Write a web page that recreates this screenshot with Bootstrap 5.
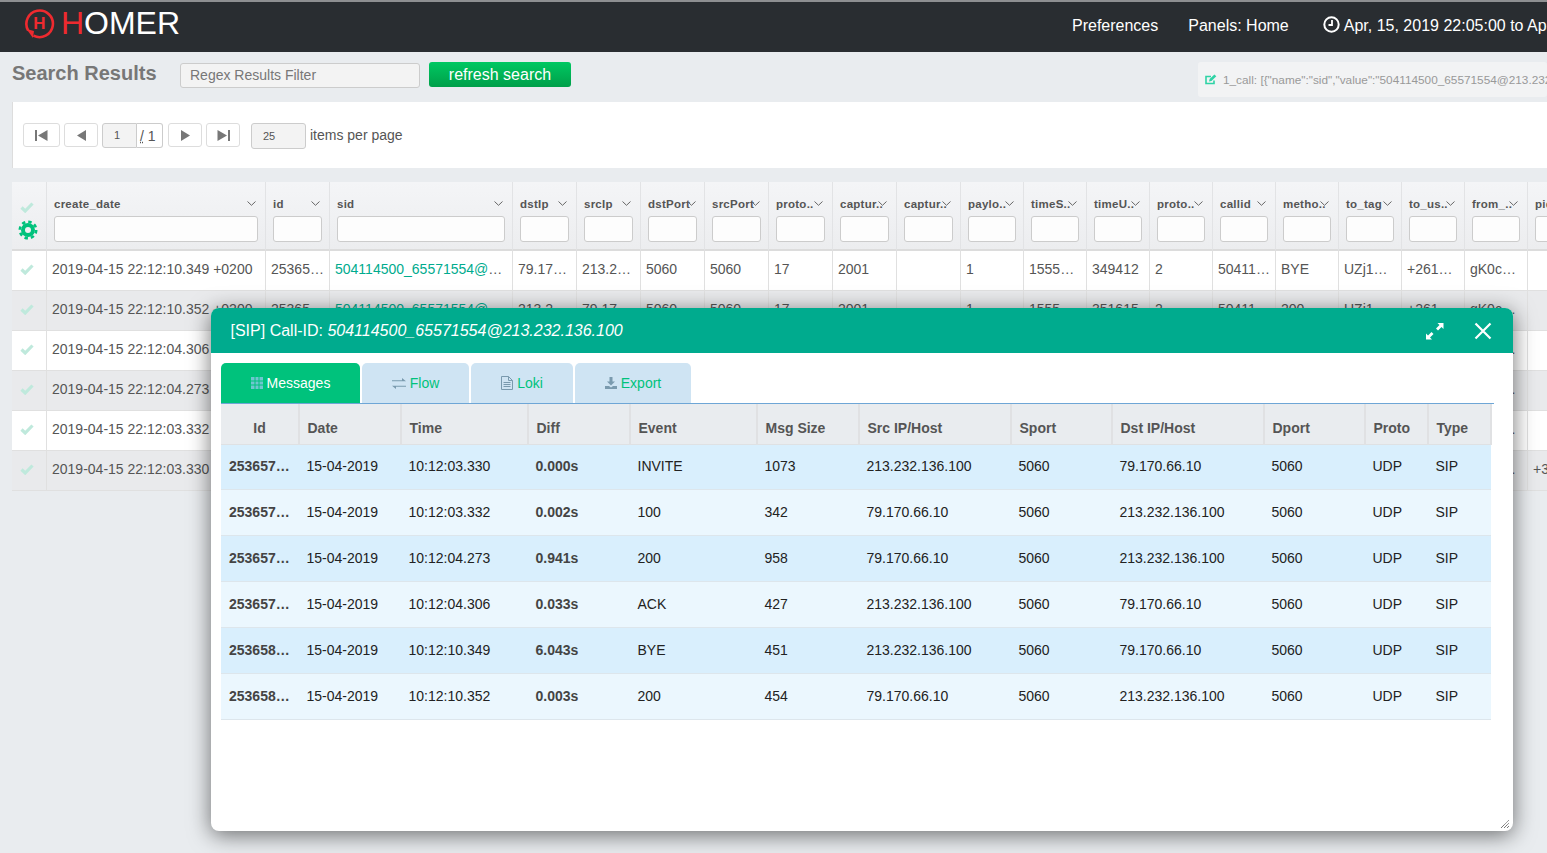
<!DOCTYPE html>
<html lang="en">
<head>
<meta charset="utf-8">
<title>HOMER</title>
<link rel="stylesheet" href="https://cdn.jsdelivr.net/npm/bootstrap@5.3.0/dist/css/bootstrap.min.css">
<style>
html,body{height:853px;overflow:hidden}
body{background:#e9ecef;font-family:"Liberation Sans",Arial,sans-serif;font-size:14px;color:#555;position:relative}
.topbar{height:52px;background:#292d31;border-top:2px solid #8d8f91;color:#fff;white-space:nowrap;overflow:hidden}
.brand{margin:-6px 0 0 24px;width:156px;height:40px;font-size:32px;line-height:38px;color:#fff;gap:6px}
.brand b{font-weight:400;color:#ee2a2f}
.brand-word{margin-top:-2px}
.topnav{font-size:16px;margin-left:auto;width:475px;flex:none;gap:30px;margin-top:-3px}
.topnav svg{margin-right:4px;vertical-align:-2px}
.toolbar{height:50px;white-space:nowrap;overflow:hidden}
.page-title{margin:-8px 0 0 12px;width:168px;font-size:20px;font-weight:700;color:#777;line-height:24px}
.regex-input{width:240px;height:25px;margin-top:-4px;padding:0 9px;background:#f3f3f3;border:1px solid #ccc;border-radius:3px;font-size:14px;color:#777}
.regex-input::placeholder{color:#777;opacity:1}
.refresh-btn{width:142px;height:25px;margin:-5px 0 0 9px;padding:0;font-size:16px;line-height:23px;color:#fff;border:0;border-radius:3px;background:linear-gradient(#00c862,#009f49)}
.tagbox{margin:10px 0 0 auto;width:349px;height:35px;flex:none;padding:11px 0 0 7px;background:#f2f3f4;border-radius:3px;font-size:11.8px;line-height:14px;color:#999;overflow:hidden}
.tagbox svg{margin-right:6px;vertical-align:-1px}
.pager-panel{height:66px;margin-left:12px;background:#fff;border-left:1px solid #ddd;padding:21px 0 0 10px;gap:4px}
.pg-btn{width:37px;height:24px;padding:0;background:#fff;border:1px solid #ddd;border-radius:3px}
.pg-btn.narrow{width:34px}
.pg-page{width:35px;height:25px;text-align:center;padding-right:5px;font-size:11px;line-height:23px;background:#f3f3f3;border:1px solid #ccc;border-radius:3px 0 0 3px;color:#555}
.pg-total{width:26px;height:25px;margin-left:-4px;border:1px solid #ccc;border-left:0;border-radius:0 3px 3px 0;color:#555;font-size:14px;line-height:24px;padding-left:3px;margin-right:1px}
.pg-size{width:55px;height:26px;margin-left:7px;padding-left:11px;font-size:11px;line-height:25px;background:#f3f3f3;border:1px solid #ccc;border-radius:3px;color:#555}
.pg-label{margin-left:0;line-height:24px;color:#555}
.grid-wrap{margin:14px 0 0 12px;overflow:hidden;width:1535px}
.results{table-layout:fixed;width:1579px;margin:0;border-collapse:separate;border-spacing:0;color:#555}
.results th{height:69px;padding:0;position:relative;font-size:11.5px;letter-spacing:.25px;font-weight:700;vertical-align:top;background:linear-gradient(#f4f5f7,#ecedef);border-right:1px solid #e2e3e5;border-bottom:2px solid #dcdcdc}
.results td{height:40px;padding:0 5px 2px;vertical-align:middle;border-right:1px solid #e0e0e0;border-bottom:1px solid #e0e0e0;white-space:nowrap;overflow:hidden;text-overflow:ellipsis;background:#fff;color:#555;font-size:14px}
.results tbody tr:nth-child(even) td{background:#e9eaec}
.results a{color:#00ab8e;text-decoration:none}
.results td.chk{padding:0 0 3px 8px}
.hd-title{display:block;padding:15px 0 0 7px;line-height:14px;white-space:nowrap;overflow:hidden}
.hd-arrow{position:absolute;right:9px;top:19px}
.hd-arrow.tight{right:8px}
.hd-input{display:block;margin:5px 0 0 7px;width:calc(100% - 14px);height:26px;background:#fdfdfd;border:1px solid #ccc;border-radius:3px}
.hd-check{position:absolute;left:8px;top:20px}
.hd-gear{position:absolute;left:6px;top:38px}
.c0{width:35px}.c1{width:219px}.c2{width:64px}.c3{width:183px}.c4{width:64px}.c5{width:63px}
.call-window{position:absolute;left:211px;top:308px;width:1302px;height:523px;background:#fff;border:0;border-radius:8px;box-shadow:0 4px 22px rgba(0,0,0,.55);z-index:10;display:block}
.call-head{height:45px;background:#00ab8e;color:#fff;font-size:16px;border-radius:8px 8px 0 0;padding:0 21px 0 19.500px;border:0;justify-content:flex-start}
.call-head i{font-style:italic}
.head-tools{margin-left:auto;gap:30px;margin-top:1px}
.call-tabs{margin:10px 0 0 10px;width:1273px;height:41px;border-bottom:1px solid #6ea6d6;gap:2px}
.call-tabs .tab-link{height:40px;padding:0;display:flex;align-items:center;justify-content:center;gap:4px;background:#cfe4f3;color:#00c27c;border:0;border-radius:5px 5px 0 0;font-size:14px;margin:0;text-decoration:none}
.call-tabs .tab-link.active{background:#00c27c;color:#fff;border:0}
.t1{width:139px}.t2{width:107px}.t3{width:102px}.t4{width:116px}
.msg-table{margin:0 0 0 10px;table-layout:fixed;width:1270px;color:#222;border-collapse:collapse}
.msg-table th{height:40px;padding:10px 7.500px 0;font-size:14px;font-weight:700;color:#555;background:#e9ecef;border:0;border-right:2px solid #e0e1e3;border-bottom:1px solid #dfe1e3;vertical-align:middle}
.msg-table th:first-child{text-align:center}
.msg-table td{height:46px;padding:0 7.500px;font-size:14px;color:#222;background:#ebf7fe;border:0;border-bottom:1px solid #dde6ec;vertical-align:middle;white-space:nowrap;overflow:hidden;text-overflow:ellipsis}
.msg-table tbody tr:first-child td{height:45px}
.msg-table td:first-child{padding-left:8px}
.msg-table tbody tr:nth-child(odd) td{background:#d9effd}
.msg-table td.strong-cell{font-weight:700;color:#444}
.m1{width:78px}.m2{width:102px}.m3{width:127px}.m4{width:152px}.m5{width:101px}.m6{width:63px}
.grip{position:absolute;right:4px;bottom:3px}
</style>
</head>
<body>
<nav class="topbar d-flex align-items-center">
  <div class="brand d-flex align-items-center">
    <svg width="31" height="32" viewBox="0 0 31 32" aria-hidden="true">
      <path d="M4.200 22.500A13.300 13.300 0 1 1 9.500 27.600" fill="none" stroke="#ee2a2f" stroke-width="2.600"/>
      <path d="M2.500 21l7.500 2-1 7z" fill="#ee2a2f"/>
      <text x="15.500" y="21.500" text-anchor="middle" font-family="Liberation Sans" font-weight="700" font-size="17" fill="#ee2a2f">H</text>
    </svg>
    <span class="brand-word"><b>H</b>OMER</span>
  </div>
  <div class="topnav d-flex">
    <span>Preferences</span>
    <span>Panels: Home</span>
    <span class="ms-1"><svg width="17" height="17" viewBox="0 0 17 17" aria-hidden="true"><circle cx="8.500" cy="8.500" r="7.200" fill="none" stroke="#fff" stroke-width="2"/><path d="M9 4v5H5.500" fill="none" stroke="#fff" stroke-width="1.800"/></svg>Apr, 15, 2019 22:05:00 to Apr, 15, 2019 22:15:00</span>
  </div>
</nav>

<div class="toolbar d-flex align-items-center">
  <div class="page-title">Search Results</div>
  <input class="regex-input" type="text" placeholder="Regex Results Filter">
  <button class="btn refresh-btn" type="button">refresh search</button>
  <div class="tagbox align-self-start">
    <svg width="12" height="11" viewBox="0 0 12 11" aria-hidden="true"><path d="M9 6.500V9.500H1V2.500H6" fill="none" stroke="#2ed3a5" stroke-width="1.600"/><path d="M4 7.500l.6-2.400L9.400.4l1.900 1.800-4.800 4.700z" fill="#2ed3a5"/></svg>1_call: [{"name":"sid","value":"504114500_65571554@213.232.136.100"}]
  </div>
</div>

<div class="pager-panel d-flex align-items-start">
  <button class="pg-btn" type="button" aria-label="first"><svg width="13" height="11" viewBox="0 0 13 11"><path d="M0 0h2v11H0zM12.500 0v11L3 5.500z" fill="#777"/></svg></button>
  <button class="pg-btn narrow" type="button" aria-label="previous"><svg width="9" height="11" viewBox="0 0 9 11"><path d="M9 0v11L0 5.500z" fill="#777"/></svg></button>
  <div class="pg-page">1</div>
  <div class="pg-total"><abbr title="Total pages">/</abbr> 1</div>
  <button class="pg-btn narrow" type="button" aria-label="next"><svg width="9" height="11" viewBox="0 0 9 11"><path d="M0 0v11l9-5.500z" fill="#777"/></svg></button>
  <button class="pg-btn narrow" type="button" aria-label="last"><svg width="13" height="11" viewBox="0 0 13 11"><path d="M13 0h-2v11h2zM.5 0v11L10 5.500z" fill="#777"/></svg></button>
  <div class="pg-size">25</div>
  <div class="pg-label">items per page</div>
</div>

<svg width="0" height="0" class="position-absolute" aria-hidden="true">
  <symbol id="chev" viewBox="0 0 9 5"><path d="M.5.5l4 3.800 4-3.800" fill="none" stroke="#666" stroke-width="1"/></symbol>
  <symbol id="tick" viewBox="0 0 14 11"><path d="M1.500 5.500l3.700 3.500 7.300-7.500" fill="none" stroke="#bfe9dc" stroke-width="3.200"/></symbol>
</svg>

<div class="grid-wrap">
<table class="table results">
  <colgroup><col class="c0"><col class="c1"><col class="c2"><col class="c3"><col class="c4"><col class="c4"><col class="c4"><col class="c4"><col class="c4"><col class="c4"><col class="c4"><col class="c5"><col class="c5"><col class="c5"><col class="c5"><col class="c5"><col class="c5"><col class="c5"><col class="c5"><col class="c5"></colgroup>
  <thead><tr>
    <th><svg class="hd-check" width="14" height="11"><use href="#tick"/></svg>
      <svg class="hd-gear" width="20" height="20" viewBox="0 0 20 20" aria-hidden="true"><circle cx="10" cy="10" r="5" fill="none" stroke="#00c27c" stroke-width="4"/><circle cx="10" cy="10" r="8.200" fill="none" stroke="#00c27c" stroke-width="2.600" stroke-dasharray="3.440 3"/></svg></th>
    <th><span class="hd-title">create_date</span><svg class="hd-arrow" width="9" height="5"><use href="#chev"/></svg><input class="hd-input" type="text" aria-label="create_date"></th>
    <th><span class="hd-title">id</span><svg class="hd-arrow" width="9" height="5"><use href="#chev"/></svg><input class="hd-input" type="text" aria-label="id"></th>
    <th><span class="hd-title">sid</span><svg class="hd-arrow" width="9" height="5"><use href="#chev"/></svg><input class="hd-input" type="text" aria-label="sid"></th>
    <th><span class="hd-title">dstIp</span><svg class="hd-arrow" width="9" height="5"><use href="#chev"/></svg><input class="hd-input" type="text" aria-label="dstIp"></th>
    <th><span class="hd-title">srcIp</span><svg class="hd-arrow" width="9" height="5"><use href="#chev"/></svg><input class="hd-input" type="text" aria-label="srcIp"></th>
    <th><span class="hd-title">dstPort</span><svg class="hd-arrow tight" width="9" height="5"><use href="#chev"/></svg><input class="hd-input" type="text" aria-label="dstPort"></th>
    <th><span class="hd-title">srcPort</span><svg class="hd-arrow tight" width="9" height="5"><use href="#chev"/></svg><input class="hd-input" type="text" aria-label="srcPort"></th>
    <th><span class="hd-title">proto..</span><svg class="hd-arrow" width="9" height="5"><use href="#chev"/></svg><input class="hd-input" type="text" aria-label="proto"></th>
    <th><span class="hd-title">captur..</span><svg class="hd-arrow" width="9" height="5"><use href="#chev"/></svg><input class="hd-input" type="text" aria-label="captur"></th>
    <th><span class="hd-title">captur..</span><svg class="hd-arrow" width="9" height="5"><use href="#chev"/></svg><input class="hd-input" type="text" aria-label="captur"></th>
    <th><span class="hd-title">paylo..</span><svg class="hd-arrow" width="9" height="5"><use href="#chev"/></svg><input class="hd-input" type="text" aria-label="paylo"></th>
    <th><span class="hd-title">timeS..</span><svg class="hd-arrow" width="9" height="5"><use href="#chev"/></svg><input class="hd-input" type="text" aria-label="timeS"></th>
    <th><span class="hd-title">timeU..</span><svg class="hd-arrow" width="9" height="5"><use href="#chev"/></svg><input class="hd-input" type="text" aria-label="timeU"></th>
    <th><span class="hd-title">proto..</span><svg class="hd-arrow" width="9" height="5"><use href="#chev"/></svg><input class="hd-input" type="text" aria-label="proto"></th>
    <th><span class="hd-title">callid</span><svg class="hd-arrow" width="9" height="5"><use href="#chev"/></svg><input class="hd-input" type="text" aria-label="callid"></th>
    <th><span class="hd-title">metho..</span><svg class="hd-arrow" width="9" height="5"><use href="#chev"/></svg><input class="hd-input" type="text" aria-label="method"></th>
    <th><span class="hd-title">to_tag</span><svg class="hd-arrow" width="9" height="5"><use href="#chev"/></svg><input class="hd-input" type="text" aria-label="to_tag"></th>
    <th><span class="hd-title">to_us..</span><svg class="hd-arrow" width="9" height="5"><use href="#chev"/></svg><input class="hd-input" type="text" aria-label="to_user"></th>
    <th><span class="hd-title">from_..</span><svg class="hd-arrow" width="9" height="5"><use href="#chev"/></svg><input class="hd-input" type="text" aria-label="from"></th>
    <th><span class="hd-title">pid</span><input class="hd-input" type="text" aria-label="pid"></th>
  </tr></thead>
  <tbody>
    <tr><td class="chk"><svg width="14" height="11"><use href="#tick"/></svg></td><td>2019-04-15 22:12:10.349 +0200</td><td>253658123</td><td><a href="#">504114500_65571554@213.232.136.100</a></td><td>79.170.66.10</td><td>213.232.136.100</td><td>5060</td><td>5060</td><td>17</td><td>2001</td><td></td><td>1</td><td>1555359130</td><td>349412</td><td>2</td><td>504114500_65571554</td><td>BYE</td><td>UZj1WWWW</td><td>+26134567</td><td>gK0c1234</td><td></td></tr>
    <tr><td class="chk"><svg width="14" height="11"><use href="#tick"/></svg></td><td>2019-04-15 22:12:10.352 +0200</td><td>253658124</td><td><a href="#">504114500_65571554@213.232.136.100</a></td><td>213.232.136.100</td><td>79.170.66.10</td><td>5060</td><td>5060</td><td>17</td><td>2001</td><td></td><td>1</td><td>1555359130</td><td>351615</td><td>2</td><td>504114500_65571554</td><td>200</td><td>UZj1WWWW</td><td>+26134567</td><td>gK0c1234</td><td></td></tr>
    <tr><td class="chk"><svg width="14" height="11"><use href="#tick"/></svg></td><td>2019-04-15 22:12:04.306 +0200</td><td>253657890</td><td><a href="#">504114500_65571554@213.232.136.100</a></td><td>79.170.66.10</td><td>213.232.136.100</td><td>5060</td><td>5060</td><td>17</td><td>2001</td><td></td><td>1</td><td>1555359124</td><td>306120</td><td>2</td><td>504114500_65571554</td><td>ACK</td><td>UZj1WWWW</td><td>+26134567</td><td>gK0c1234</td><td></td></tr>
    <tr><td class="chk"><svg width="14" height="11"><use href="#tick"/></svg></td><td>2019-04-15 22:12:04.273 +0200</td><td>253657889</td><td><a href="#">504114500_65571554@213.232.136.100</a></td><td>213.232.136.100</td><td>79.170.66.10</td><td>5060</td><td>5060</td><td>17</td><td>2001</td><td></td><td>1</td><td>1555359124</td><td>273004</td><td>2</td><td>504114500_65571554</td><td>200</td><td>UZj1WWWW</td><td>+26134567</td><td>gK0c1234</td><td></td></tr>
    <tr><td class="chk"><svg width="14" height="11"><use href="#tick"/></svg></td><td>2019-04-15 22:12:03.332 +0200</td><td>253657788</td><td><a href="#">504114500_65571554@213.232.136.100</a></td><td>213.232.136.100</td><td>79.170.66.10</td><td>5060</td><td>5060</td><td>17</td><td>2001</td><td></td><td>1</td><td>1555359123</td><td>332410</td><td>2</td><td>504114500_65571554</td><td>100</td><td></td><td>+26134567</td><td>gK0c1234</td><td></td></tr>
    <tr><td class="chk"><svg width="14" height="11"><use href="#tick"/></svg></td><td>2019-04-15 22:12:03.330 +0200</td><td>253657787</td><td><a href="#">504114500_65571554@213.232.136.100</a></td><td>79.170.66.10</td><td>213.232.136.100</td><td>5060</td><td>5060</td><td>17</td><td>2001</td><td></td><td>1</td><td>1555359123</td><td>330118</td><td>2</td><td>504114500_65571554</td><td>INVITE</td><td></td><td>+26134567</td><td>gK0c1234</td><td>+3</td></tr>
  </tbody>
</table>
</div>

<section class="modal-content call-window">
  <div class="modal-header call-head d-flex align-items-center">
    <span>[SIP] Call-ID: <i>504114500_65571554@213.232.136.100</i></span>
    <div class="head-tools d-flex align-items-center">
      <svg width="18" height="17" viewBox="0 0 18 17" aria-label="expand"><path d="M11.500 0H17.500V6L15.500 4 12 7.500 10 5.500 13.500 2zM6 16.500H0V10.500L2 12.500 5.500 9 7.500 11 4 14.500z" fill="#fff"/></svg>
      <svg width="18" height="18" viewBox="0 0 18 18" aria-label="close"><path d="M1.500 1.500l15 15M16.500 1.500l-15 15" stroke="#fff" stroke-width="2.200"/></svg>
    </div>
  </div>
  <div class="nav call-tabs">
    <a class="tab-link t1 active" href="#"><svg width="12" height="12" viewBox="0 0 12 12" aria-hidden="true"><path d="M0 0h12v12H0z" fill="#6fc6d0"/><path d="M4 0v12M8 0v12M0 4h12M0 8h12" stroke="#00c27c" stroke-width="1"/></svg>Messages</a>
    <a class="tab-link t2" href="#"><svg width="14" height="11" viewBox="0 0 14 11" aria-hidden="true"><path d="M10 0l4 3.300H0V2.300h10zM4 11L0 7.700h14v1H4z" fill="#7a9aae"/></svg>Flow</a>
    <a class="tab-link t3" href="#"><svg width="12" height="14" viewBox="0 0 12 14" aria-hidden="true"><path d="M.5.500h7l4 4v9H.5z" fill="none" stroke="#7a9aae"/><path d="M7.500.5v4h4M2.500 6.500h7M2.500 8.500h7M2.500 10.500h7" fill="none" stroke="#7a9aae"/></svg>Loki</a>
    <a class="tab-link t4" href="#"><svg width="12" height="12" viewBox="0 0 12 12" aria-hidden="true"><path d="M4.500 0h3v4.500H10L6 8.500 2 4.500h2.500zM0 9h4l2 1.500L8 9h4v3H0z" fill="#7a9aae"/></svg>Export</a>
  </div>
  <table class="table msg-table">
    <colgroup><col class="m1"><col class="m2"><col class="m3"><col class="m2"><col class="m3"><col class="m2"><col class="m4"><col class="m5"><col class="m4"><col class="m5"><col class="m6"><col class="m6"></colgroup>
    <thead><tr><th>Id</th><th>Date</th><th>Time</th><th>Diff</th><th>Event</th><th>Msg Size</th><th>Src IP/Host</th><th>Sport</th><th>Dst IP/Host</th><th>Dport</th><th>Proto</th><th>Type</th></tr></thead>
    <tbody>
      <tr><td class="strong-cell">253657787</td><td>15-04-2019</td><td>10:12:03.330</td><td class="strong-cell">0.000s</td><td>INVITE</td><td>1073</td><td>213.232.136.100</td><td>5060</td><td>79.170.66.10</td><td>5060</td><td>UDP</td><td>SIP</td></tr>
      <tr><td class="strong-cell">253657788</td><td>15-04-2019</td><td>10:12:03.332</td><td class="strong-cell">0.002s</td><td>100</td><td>342</td><td>79.170.66.10</td><td>5060</td><td>213.232.136.100</td><td>5060</td><td>UDP</td><td>SIP</td></tr>
      <tr><td class="strong-cell">253657889</td><td>15-04-2019</td><td>10:12:04.273</td><td class="strong-cell">0.941s</td><td>200</td><td>958</td><td>79.170.66.10</td><td>5060</td><td>213.232.136.100</td><td>5060</td><td>UDP</td><td>SIP</td></tr>
      <tr><td class="strong-cell">253657890</td><td>15-04-2019</td><td>10:12:04.306</td><td class="strong-cell">0.033s</td><td>ACK</td><td>427</td><td>213.232.136.100</td><td>5060</td><td>79.170.66.10</td><td>5060</td><td>UDP</td><td>SIP</td></tr>
      <tr><td class="strong-cell">253658123</td><td>15-04-2019</td><td>10:12:10.349</td><td class="strong-cell">6.043s</td><td>BYE</td><td>451</td><td>213.232.136.100</td><td>5060</td><td>79.170.66.10</td><td>5060</td><td>UDP</td><td>SIP</td></tr>
      <tr><td class="strong-cell">253658124</td><td>15-04-2019</td><td>10:12:10.352</td><td class="strong-cell">0.003s</td><td>200</td><td>454</td><td>79.170.66.10</td><td>5060</td><td>213.232.136.100</td><td>5060</td><td>UDP</td><td>SIP</td></tr>
    </tbody>
  </table>
  <svg class="grip" width="8" height="8" viewBox="0 0 8 8" aria-hidden="true"><path d="M0 8L8 0M3 8l5-5M6 8l2-2" stroke="#444" stroke-width="1" stroke-dasharray="1 .6"/></svg>
</section>
<script src="https://cdn.jsdelivr.net/npm/bootstrap@5.3.0/dist/js/bootstrap.bundle.min.js"></script>
</body>
</html>
